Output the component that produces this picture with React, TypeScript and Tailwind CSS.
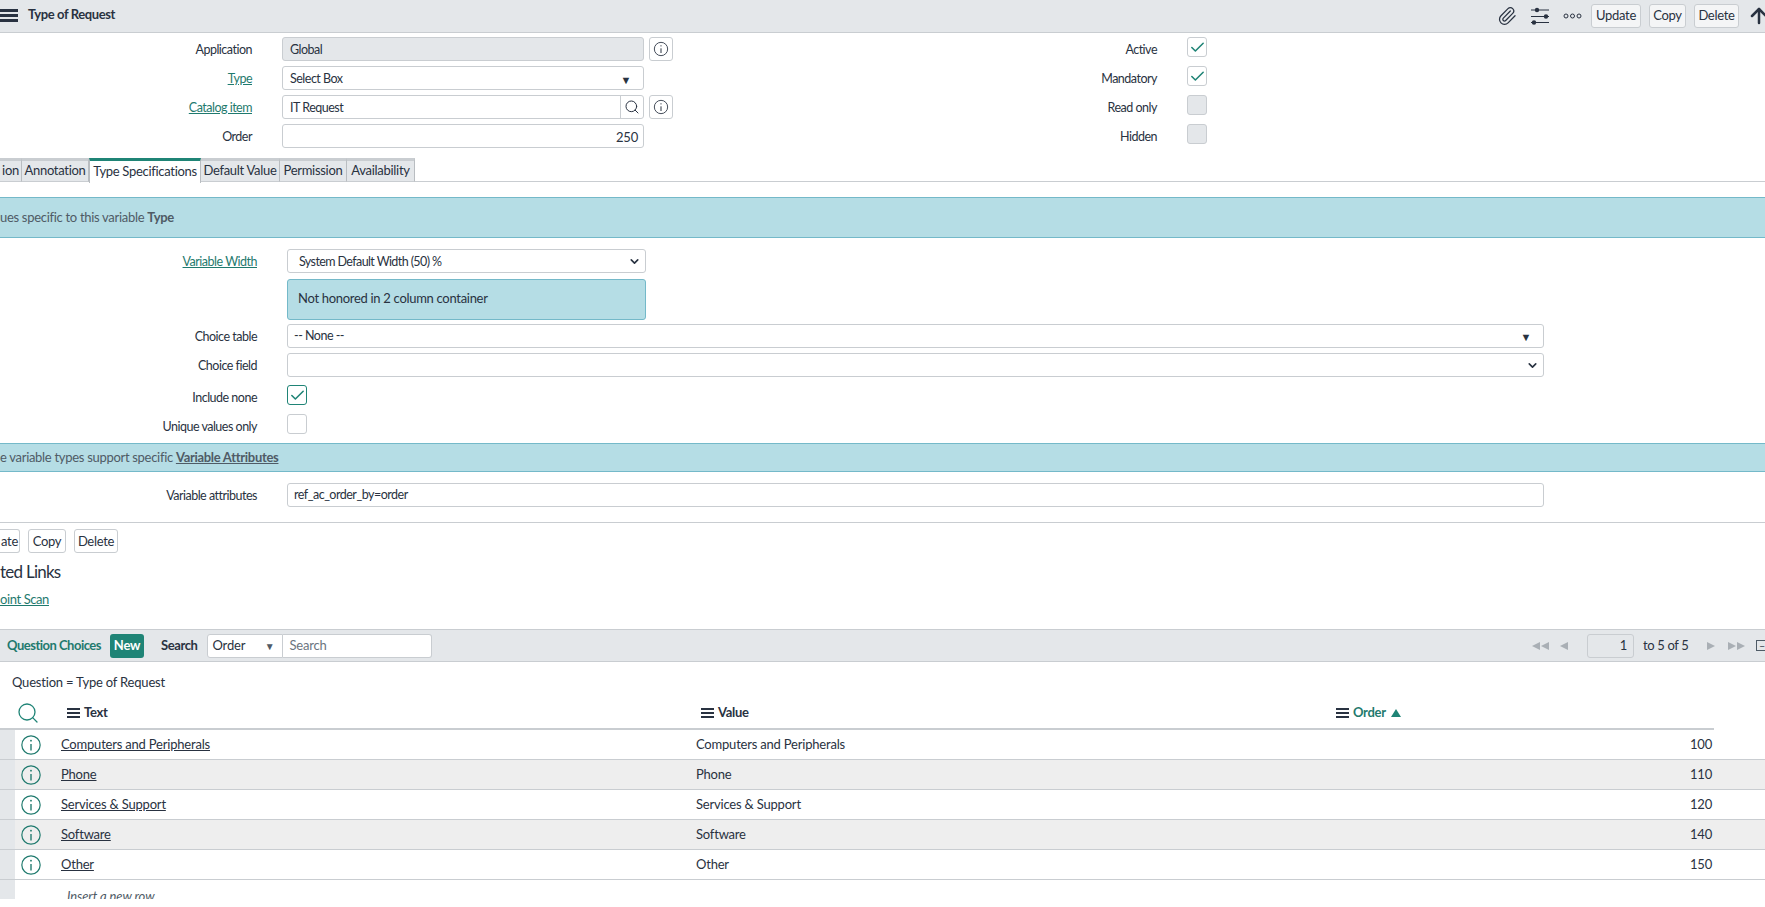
import { Paperclip, Search, Check, ChevronDown, ArrowUp } from 'lucide-react'

const labelLink = 'text-[#1f7a6e] underline'
const smallText = 'text-[12.5px] tracking-[-0.5px]'
const small = `${smallText} pt-[2px]`

function Bars({ className = '' }: { className?: string }) {
  return (
    <span className={`flex flex-col gap-[2px] shrink-0 ${className}`}>
      <span className="h-[2px] bg-[#293241]" />
      <span className="h-[2px] bg-[#293241]" />
      <span className="h-[2px] bg-[#293241]" />
    </span>
  )
}

function InfoIcon({ size, className = '' }: { size: number; className?: string }) {
  return (
    <svg width={size} height={size} viewBox="0 0 24 24" fill="none" stroke="currentColor" strokeWidth="1.3" className={`shrink-0 ${className}`}>
      <circle cx="12" cy="12" r="10" />
      <path d="M12 11v7" strokeWidth="1.5" />
      <circle cx="12" cy="7.3" r="1" fill="currentColor" stroke="none" />
    </svg>
  )
}

function Field({ label, link, children }: { label: string; link?: boolean; children: React.ReactNode }) {
  return (
    <div className="flex h-[24px] items-center">
      <div className={`w-[252px] text-right ${small} ${link ? labelLink : ''}`}>{label}</div>
      <div className="ml-[30px] flex items-center gap-[5px]">{children}</div>
    </div>
  )
}

function InfoButton() {
  return (
    <span className="flex h-[24px] w-[24px] items-center justify-center rounded-[3px] border border-[#c9cdd1] bg-white">
      <InfoIcon size={16} />
    </span>
  )
}

function Tab({ label, width, active }: { label: string; width: string; active?: boolean }) {
  return (
    <div className={`flex h-[24px] items-center justify-center border-r border-[#b9bdc1] pb-[2px] tracking-[-0.3px] ${width} ${active ? 'border-t-[3px] border-t-[#1f8476] bg-white border-l border-l-[#b9bdc1] h-[25px] -mb-px' : 'border-t-[3px] border-t-[#c9cdd1] bg-[#e4e7ea] border-b border-b-[#c9cdd1]'}`}>
      {label}
    </div>
  )
}

function Btn({ label, className = '' }: { label: string; className?: string }) {
  return (
    <span className={`flex h-[24px] items-center justify-center rounded-[3px] border border-[#c9cdd1] bg-[#f4f5f6] tracking-[-0.3px] ${className}`}>
      {label}
    </span>
  )
}

const rows = [
  { text: 'Computers and Peripherals', order: 100, alt: false },
  { text: 'Phone', order: 110, alt: true },
  { text: 'Services & Support', order: 120, alt: false },
  { text: 'Software', order: 140, alt: true },
  { text: 'Other', order: 150, alt: false },
]

export default function App() {
  return (
    <div className="h-[899px] w-[1765px] overflow-hidden bg-white font-['Lato',sans-serif] text-[13px] leading-none tracking-[-0.2px] text-[#293241]">
      {/* header */}
      <div className="flex h-[33px] items-center border-b border-[#c9cdd1] bg-[#e4e7ea]">
        <Bars className="mb-[2px] w-[18px] [&>span]:h-[3px]" />
        <span className="mb-[4px] ml-[10px] font-bold tracking-[-0.4px]">Type of Request</span>
        <div className="mb-[1px] ml-auto flex items-center">
          <Paperclip size={20} strokeWidth={1.5} />
          <svg width="18" height="18" viewBox="0 0 18 18" className="ml-[14px]">
            <path d="M0 3h18M0 9.5h18M0 15.5h18" stroke="#293241" strokeWidth="1.2" />
            <circle cx="6" cy="3" r="2.2" fill="#293241" />
            <circle cx="15" cy="9.5" r="2.2" fill="#293241" />
            <circle cx="3" cy="15.5" r="2.2" fill="#293241" />
          </svg>
          <svg width="19" height="6" viewBox="0 0 19 6" className="ml-[14px]">
            <circle cx="3" cy="3" r="2" fill="none" stroke="#293241" />
            <circle cx="9.5" cy="3" r="2" fill="none" stroke="#293241" />
            <circle cx="16" cy="3" r="2" fill="none" stroke="#293241" />
          </svg>
          <Btn label="Update" className="ml-[9px] w-[50px]" />
          <Btn label="Copy" className="ml-[8px] w-[37px]" />
          <Btn label="Delete" className="ml-[8px] w-[45px]" />
          <ArrowUp size={24} strokeWidth={2.5} className="ml-[8px] mr-[-6px]" />
        </div>
      </div>

      {/* top form */}
      <div className="flex h-[125px] pt-[4px]">
        <div className="flex w-[905px] flex-col gap-[5px]">
          <Field label="Application">
            <span className={`flex h-[24px] w-[362px] items-center rounded-[3px] border border-[#c9cdd1] bg-[#e4e7ea] px-[7px] ${small}`}>Global</span>
            <InfoButton />
          </Field>
          <Field label="Type" link>
            <span className={`flex h-[24px] w-[362px] items-center justify-between rounded-[3px] border border-[#c9cdd1] bg-white pl-[7px] pr-[12px] ${small}`}>
              Select Box
              <span className="text-[11px]">▼</span>
            </span>
          </Field>
          <Field label="Catalog item" link>
            <span className={`flex h-[24px] w-[362px] items-center justify-between rounded-[3px] border border-[#c9cdd1] bg-white pl-[7px] ${smallText}`}>
              <span className="pt-[2px]">IT Request</span>
              <span className="flex h-full w-[23px] items-center justify-center border-l border-[#c9cdd1]">
                <Search size={16} strokeWidth={1.5} />
              </span>
            </span>
            <InfoButton />
          </Field>
          <Field label="Order">
            <span className="flex h-[24px] w-[362px] items-center justify-end rounded-[3px] border border-[#c9cdd1] bg-white pr-[5px] pt-[2px]">250</span>
          </Field>
        </div>
        <div className="flex flex-col gap-[9px]">
          {['Active', 'Mandatory', 'Read only', 'Hidden'].map((label, i) => (
            <div key={label} className="flex h-[20px] items-start">
              <div className={`w-[252px] pt-[7px] text-right ${smallText}`}>{label}</div>
              <span className={`ml-[30px] flex h-[20px] w-[20px] items-center justify-center rounded-[3px] border border-[#c9cdd1] ${i < 2 ? 'bg-white' : 'bg-[#e4e7ea]'}`}>
                {i < 2 && <Check size={17} strokeWidth={2.2} className="text-[#1f8476]" />}
              </span>
            </div>
          ))}
        </div>
      </div>

      {/* tabs */}
      <div className="flex h-[24px] border-b border-[#c9cdd1]">
        <Tab label="ion" width="w-[22px]" />
        <Tab label="Annotation" width="w-[67px]" />
        <Tab label="Type Specifications" width="w-[112px]" active />
        <Tab label="Default Value" width="w-[79px]" />
        <Tab label="Permission" width="w-[67px]" />
        <Tab label="Availability" width="w-[68px]" />
      </div>

      {/* type specifications */}
      <div className="mt-[15px] flex h-[41px] items-center border-y border-[#74b9c9] bg-[#b5dde5] tracking-[-0.3px] text-[#4f5b66]">
        ues specific to this variable&nbsp;<b>Type</b>
      </div>
      <div className="mt-[11px] flex h-[24px] items-center">
        <div className={`w-[257px] text-right ${small} ${labelLink}`}>Variable Width</div>
        <span className="ml-[30px] flex h-[24px] w-[359px] items-center justify-between rounded-[3px] border border-[#c9cdd1] bg-white pl-[11px] pr-[4px] text-[12.5px] tracking-[-0.6px]">
          <span className="pt-[2px]">System Default Width (50) %</span>
          <ChevronDown size={13} strokeWidth={3} />
        </span>
      </div>
      <div className="ml-[287px] mt-[6px] flex h-[41px] w-[359px] items-center rounded-[3px] border border-[#74b9c9] bg-[#b5dde5] px-[10px] pb-[2px] tracking-[-0.3px]">
        Not honored in 2 column container
      </div>
      <div className="mt-[4px] flex flex-col gap-[5px]">
        <div className="flex h-[24px] items-center">
          <div className={`w-[257px] text-right ${small}`}>Choice table</div>
          <span className={`ml-[30px] flex h-[24px] w-[1257px] items-center justify-between rounded-[3px] border border-[#c9cdd1] bg-white pl-[6px] pr-[12px] ${smallText}`}>
            -- None --
            <span className="text-[11px]">▼</span>
          </span>
        </div>
        <div className="flex h-[24px] items-center">
          <div className={`w-[257px] text-right ${small}`}>Choice field</div>
          <span className="ml-[30px] flex h-[24px] w-[1257px] items-center justify-end rounded-[3px] border border-[#c9cdd1] bg-white pr-[4px]">
            <ChevronDown size={13} strokeWidth={3} />
          </span>
        </div>
      </div>
      <div className="mt-[8px] flex flex-col">
        <div className="flex h-[29px] items-start">
          <div className={`w-[257px] pt-[7px] text-right ${smallText}`}>Include none</div>
          <span className="ml-[30px] flex h-[20px] w-[20px] items-center justify-center rounded-[3px] border border-[#1f8476] bg-white">
            <Check size={17} strokeWidth={2.2} className="text-[#1f8476]" />
          </span>
        </div>
        <div className="flex h-[29px] items-start">
          <div className={`w-[257px] pt-[7px] text-right ${smallText}`}>Unique values only</div>
          <span className="ml-[30px] h-[20px] w-[20px] rounded-[3px] border border-[#c9cdd1] bg-white" />
        </div>
      </div>
      <div className="flex h-[29px] items-center border-y border-[#74b9c9] bg-[#b5dde5] tracking-[-0.3px] text-[#4f5b66]">
        e variable types support specific&nbsp;<b className="underline">Variable Attributes</b>
      </div>
      <div className="mt-[11px] flex h-[24px] items-center">
        <div className={`w-[257px] text-right ${small}`}>Variable attributes</div>
        <span className={`ml-[30px] flex h-[24px] w-[1257px] items-center rounded-[3px] border border-[#c9cdd1] bg-white pl-[6px] ${smallText}`}>ref_ac_order_by=order</span>
      </div>
      <div className="mt-[15px] border-t border-[#c9cdd1]" />
      <div className="mt-[6px] flex gap-[8px]">
        <Btn label="ate" className="w-[20px] rounded-l-none border-l-0 bg-white" />
        <Btn label="Copy" className="w-[38px] bg-white" />
        <Btn label="Delete" className="w-[44px] bg-white" />
      </div>
      <div className="mt-[10px] text-[17px] tracking-[-0.75px]">ted Links</div>
      <div className="mt-[13px] tracking-[-0.4px] text-[#1f7a6e] underline">oint Scan</div>

      {/* related list */}
      <div className="mt-[23px] flex h-[33px] items-center border-y border-[#c9cdd1] bg-[#e4e7ea]">
        <span className="ml-[7px] font-bold tracking-[-0.5px] text-[#1f7a6e]">Question Choices</span>
        <span className="ml-[9px] flex h-[24px] w-[34px] items-center justify-center rounded-[3px] bg-[#1f8476] font-bold text-white">New</span>
        <span className="ml-[17px] font-bold tracking-[-0.4px]">Search</span>
        <span className="ml-[9px] flex h-[24px] w-[76px] items-center justify-between rounded-l-[3px] border border-[#c9cdd1] bg-white pl-[5px] pr-[7px]">
          Order
          <span className="text-[10px] text-[#4f5b66]">▼</span>
        </span>
        <span className="flex h-[24px] w-[149px] items-center rounded-r-[3px] border border-l-0 border-[#c9cdd1] bg-white pl-[7px] text-[#6b7580]">Search</span>
        <div className="ml-auto flex items-center">
          <span className="h-0 w-0 border-y-[4px] border-r-[8px] border-y-transparent border-r-[#a9afb5]" />
          <span className="ml-[1px] h-0 w-0 border-y-[4px] border-r-[8px] border-y-transparent border-r-[#a9afb5]" />
          <span className="ml-[11px] h-0 w-0 border-y-[4px] border-r-[8px] border-y-transparent border-r-[#a9afb5]" />
          <span className="ml-[19px] flex h-[24px] w-[47px] items-center justify-end rounded-[3px] border border-[#c9cdd1] bg-[#e4e7ea] pr-[6px]">1</span>
          <span className="ml-[9px] w-[45px] whitespace-nowrap tracking-[-0.35px]">to 5 of 5</span>
          <span className="ml-[19px] h-0 w-0 border-y-[4px] border-l-[8px] border-y-transparent border-l-[#a9afb5]" />
          <span className="ml-[13px] h-0 w-0 border-y-[4px] border-l-[8px] border-y-transparent border-l-[#a9afb5]" />
          <span className="ml-[1px] h-0 w-0 border-y-[4px] border-l-[8px] border-y-transparent border-l-[#a9afb5]" />
          <span className="ml-[11px] mr-[-3px] flex h-[11px] w-[12px] items-center justify-center border border-[#4f5b66] text-[10px]">−</span>
        </div>
      </div>
      <div className="ml-[12px] mt-[14px]">Question = Type of Request</div>

      {/* list table */}
      <div className="mt-[17px] flex h-[24px] w-[1714px] items-center border-b-[2px] border-[#c9cdd1] pb-[9px]">
        <span className="w-[67px] shrink-0">
          <Search size={24} strokeWidth={1.3} className="ml-[16px] text-[#1f8476]" />
        </span>
        <span className="flex w-[634px] shrink-0 items-center gap-[4px] font-bold tracking-[-0.3px]">
          <Bars className="w-[13px]" />
          Text
        </span>
        <span className="flex w-[635px] shrink-0 items-center gap-[4px] font-bold tracking-[-0.3px]">
          <Bars className="w-[13px]" />
          Value
        </span>
        <Bars className="w-[13px]" />
        <span className="ml-[4px] font-bold tracking-[-0.3px] text-[#1f7a6e]">Order</span>
        <span className="ml-[5px] h-0 w-0 border-x-[5px] border-b-[8px] border-x-transparent border-b-[#1f8476]" />
      </div>
      {rows.map((row) => (
        <div key={row.text} className={`flex h-[30px] items-center border-b border-[#c9cdd1] ${row.alt ? 'bg-[#eeeeee]' : 'bg-white'}`}>
          <span className="h-full w-[15px] shrink-0 bg-[#e4e7ea]" />
          <InfoIcon size={22} className="ml-[5px] text-[#1f7a6e]" />
          <a className="ml-[19px] w-[635px] shrink-0 underline">{row.text}</a>
          <span className="flex-1">{row.text}</span>
          <span className="pr-[53px] text-right">{row.order}</span>
        </div>
      ))}
      <div className="flex h-[19px]">
        <span className="h-full w-[15px] bg-[#e4e7ea]" />
        <span className="ml-[52px] pt-[10px] italic tracking-[-0.1px] text-[#4f5b66]">Insert a new row</span>
      </div>
    </div>
  )
}
